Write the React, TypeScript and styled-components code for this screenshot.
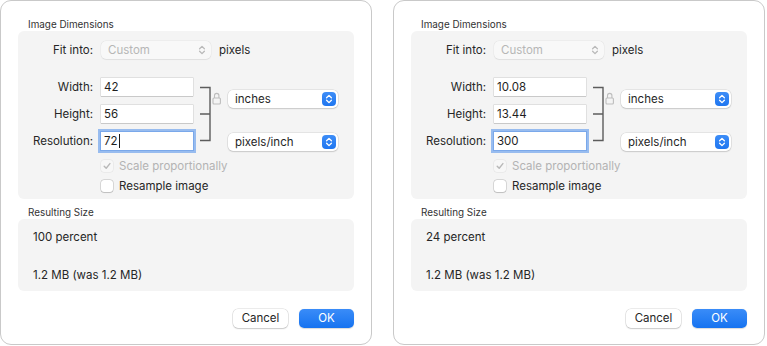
import React from "react";
import styled, { createGlobalStyle } from "styled-components";

const GlobalStyle = createGlobalStyle`
  html, body {
    margin: 0;
    padding: 0;
    background: #ffffff;
  }
  body {
    font-family: Inter, "Liberation Sans", sans-serif;
    color: #262626;
    -webkit-font-smoothing: antialiased;
  }
`;

type DialogData = {
	width: string;
	height: string;
	resolution: string;
	percent: string;
	caret: boolean;
};

const dialogs: DialogData[] = [
	{ width: "42", height: "56", resolution: "72", percent: "100 percent", caret: true },
	{ width: "10.08", height: "13.44", resolution: "300", percent: "24 percent", caret: false },
];

const Stepper = ({ disabled }: { disabled?: boolean }) => (
	<StepperBox $disabled={disabled}>
		<svg width='14' height='14' viewBox='0 0 14 14'>
			<path
				d='M4.6 5.8 L7 3.4 L9.4 5.8 M4.6 8.2 L7 10.6 L9.4 8.2'
				fill='none'
				stroke={disabled ? "#b9b9b9" : "#ffffff"}
				strokeWidth='1.3'
				strokeLinecap='round'
				strokeLinejoin='round'
			/>
		</svg>
	</StepperBox>
);

const Bracket = () => (
	<BracketBox>
		<svg width='35' height='72' viewBox='0 0 35 72'>
			<path
				d='M7 9.5 H17 V62.5 H7 M7 36 H17'
				fill='none'
				stroke='#5c5c5c'
				strokeWidth='1.4'
			/>
			<path
				d='M21.5 20 V17.6 a2.2 2.2 0 0 1 4.4 0 V20'
				fill='none'
				stroke='#bdbdbd'
				strokeWidth='1.1'
			/>
			<rect x='20' y='20' width='7.4' height='6' rx='1' fill='none' stroke='#bdbdbd' strokeWidth='1.1' />
		</svg>
	</BracketBox>
);

const SizeDialog = ({ data }: { data: DialogData }) => (
	<Dialog>
		<SectionTitle>Image Dimensions</SectionTitle>
		<Group>
			<FitRow>
				<Label>Fit into:</Label>
				<Popup $disabled $width={110}>
					Custom
					<Stepper disabled />
				</Popup>
				<Unit>pixels</Unit>
			</FitRow>

			<FieldsGrid>
				<Label>Width:</Label>
				<Field>{data.width}</Field>
				<Bracket />
				<UnitsPopup $width={110}>
					inches
					<Stepper />
				</UnitsPopup>

				<Label>Height:</Label>
				<Field>{data.height}</Field>

				<Label>Resolution:</Label>
				<Field $focused>
					{data.resolution}
					{data.caret && <Caret />}
				</Field>
				<ResPopup $width={110}>
					pixels/inch
					<Stepper />
				</ResPopup>
			</FieldsGrid>

			<CheckRow>
				<Checkbox $disabled>
					<svg width='10' height='10' viewBox='0 0 10 10'>
						<path
							d='M2.2 5.2 L4.2 7.3 L7.9 2.6'
							fill='none'
							stroke='#b8b8b8'
							strokeWidth='1.4'
							strokeLinecap='round'
							strokeLinejoin='round'
						/>
					</svg>
				</Checkbox>
				<CheckText $disabled>Scale proportionally</CheckText>
			</CheckRow>
			<CheckRow $second>
				<Checkbox />
				<CheckText>Resample image</CheckText>
			</CheckRow>
		</Group>

		<SectionTitle $second>Resulting Size</SectionTitle>
		<ResultGroup>
			<ResultLine>{data.percent}</ResultLine>
			<ResultLine $second>1.2 MB (was 1.2 MB)</ResultLine>
		</ResultGroup>

		<ButtonRow>
			<Button>Cancel</Button>
			<Button $primary>OK</Button>
		</ButtonRow>
	</Dialog>
);

export default function App() {
	return (
		<>
			<GlobalStyle />
			<Page>
				{dialogs.map((d, i) => (
					<SizeDialog key={i} data={d} />
				))}
			</Page>
		</>
	);
}

const Page = styled.div`
	display: flex;
	gap: 21px;
	width: 767px;
	height: 346px;
`;

const Dialog = styled.div`
	box-sizing: border-box;
	width: 372px;
	height: 345px;
	border: 1px solid #c9c9c9;
	border-radius: 11px;
	background: #ffffff;
	padding: 16px 17px 0 17px;
	display: flex;
	flex-direction: column;
`;

const SectionTitle = styled.div<{ $second?: boolean }>`
	font-size: 9.9px;
	line-height: 14px;
	height: 14px;
	padding-left: 10px;
	color: #333333;
	margin-top: ${(p) => (p.$second ? "6px" : "0")};
`;

const Group = styled.div`
	background: #f4f4f4;
	border-radius: 6px;
	padding: 10px 15px 5px 8px;
	font-size: 11.5px;
`;

const FitRow = styled.div`
	display: flex;
	align-items: center;
	height: 18px;
`;

const Label = styled.div`
	width: 67px;
	margin-right: 8px;
	text-align: right;
	font-size: 11.5px;
	line-height: 18px;
	color: #262626;
`;

const Unit = styled.div`
	margin-left: 8px;
	font-size: 11.5px;
`;

const Popup = styled.div<{ $disabled?: boolean; $width: number }>`
	box-sizing: border-box;
	position: relative;
	width: ${(p) => p.$width}px;
	height: 18px;
	line-height: 18px;
	padding-left: 7px;
	border-radius: 5px;
	font-size: 11.5px;
	color: ${(p) => (p.$disabled ? "#b6b6b6" : "#262626")};
	background: ${(p) => (p.$disabled ? "#f8f8f8" : "#ffffff")};
	box-shadow: ${(p) =>
		p.$disabled
			? "0 0 0 0.5px rgba(0,0,0,0.05), 0 0.5px 1px rgba(0,0,0,0.06)"
			: "0 0 0 0.5px rgba(0,0,0,0.13), 0 1px 1.5px rgba(0,0,0,0.12)"};
`;

const UnitsPopup = styled(Popup)`
	grid-column: 4;
	grid-row: 1 / 3;
	align-self: center;
	margin-bottom: 3px;
`;

const ResPopup = styled(Popup)`
	grid-column: 4;
	grid-row: 3;
	align-self: center;
	margin-top: 2px;
`;

const StepperBox = styled.div<{ $disabled?: boolean }>`
	position: absolute;
	right: 2px;
	top: 2px;
	width: 14px;
	height: 14px;
	border-radius: 4px;
	background: ${(p) => (p.$disabled ? "transparent" : "linear-gradient(#3d8df7, #1f76f0)")};
	display: flex;

	svg {
		display: block;
	}
`;

const FieldsGrid = styled.div`
	display: grid;
	grid-template-columns: 75px 92px 35px 110px;
	grid-template-rows: repeat(3, 18px);
	row-gap: 9px;
	margin-top: 19px;
`;

const Field = styled.div<{ $focused?: boolean }>`
	grid-column: 2;
	box-sizing: border-box;
	height: 18px;
	line-height: 18px;
	padding-left: 3px;
	font-size: 11.5px;
	color: #1e1e1e;
	background: #ffffff;
	display: flex;
	align-items: center;
	box-shadow: ${(p) =>
		p.$focused
			? "0 0 0 1px #7aa8ea, 0 0 0 3px rgba(90, 150, 235, 0.6)"
			: "0 0 0 0.5px rgba(0,0,0,0.16), 0 0.5px 0.5px rgba(0,0,0,0.1)"};
`;

const Caret = styled.span`
	display: inline-block;
	width: 1px;
	height: 14px;
	margin-left: 1px;
	background: #1e1e1e;
`;

const BracketBox = styled.div`
	grid-column: 3;
	grid-row: 1 / 4;
	svg {
		display: block;
	}
`;

const CheckRow = styled.div<{ $second?: boolean }>`
	display: flex;
	align-items: center;
	height: 16px;
	margin-left: 75px;
	margin-top: ${(p) => (p.$second ? "4px" : "8px")};
	gap: 6px;
`;

const Checkbox = styled.div<{ $disabled?: boolean }>`
	box-sizing: border-box;
	width: 12px;
	height: 12px;
	border-radius: 3px;
	background: ${(p) => (p.$disabled ? "#f7f7f7" : "#ffffff")};
	box-shadow: ${(p) =>
		p.$disabled
			? "0 0 0 0.5px rgba(0,0,0,0.08)"
			: "0 0 0 0.5px rgba(0,0,0,0.22), 0 0.5px 1px rgba(0,0,0,0.12)"};
	display: flex;
	align-items: center;
	justify-content: center;

	svg {
		display: block;
	}
`;

const CheckText = styled.div<{ $disabled?: boolean }>`
	font-size: 11.5px;
	color: ${(p) => (p.$disabled ? "#b3b3b3" : "#262626")};
`;

const ResultGroup = styled.div`
	background: #f4f4f4;
	border-radius: 6px;
	padding: 11px 15px 8px;
	height: 72px;
	box-sizing: border-box;
`;

const ResultLine = styled.div<{ $second?: boolean }>`
	font-size: 11.5px;
	line-height: 15px;
	color: #262626;
	margin-top: ${(p) => (p.$second ? "23px" : "0")};
`;

const ButtonRow = styled.div`
	display: flex;
	justify-content: flex-end;
	gap: 11px;
	margin-top: 18px;
`;

const Button = styled.div<{ $primary?: boolean }>`
	width: 55px;
	height: 19px;
	line-height: 19px;
	border-radius: 5px;
	text-align: center;
	font-size: 11.5px;
	color: ${(p) => (p.$primary ? "#ffffff" : "#262626")};
	background: ${(p) => (p.$primary ? "linear-gradient(#3a8cf8, #1673f0)" : "#ffffff")};
	box-shadow: ${(p) =>
		p.$primary
			? "0 0.5px 1px rgba(0,0,0,0.15)"
			: "0 0 0 0.5px rgba(0,0,0,0.16), 0 1px 1.5px rgba(0,0,0,0.14)"};
`;
